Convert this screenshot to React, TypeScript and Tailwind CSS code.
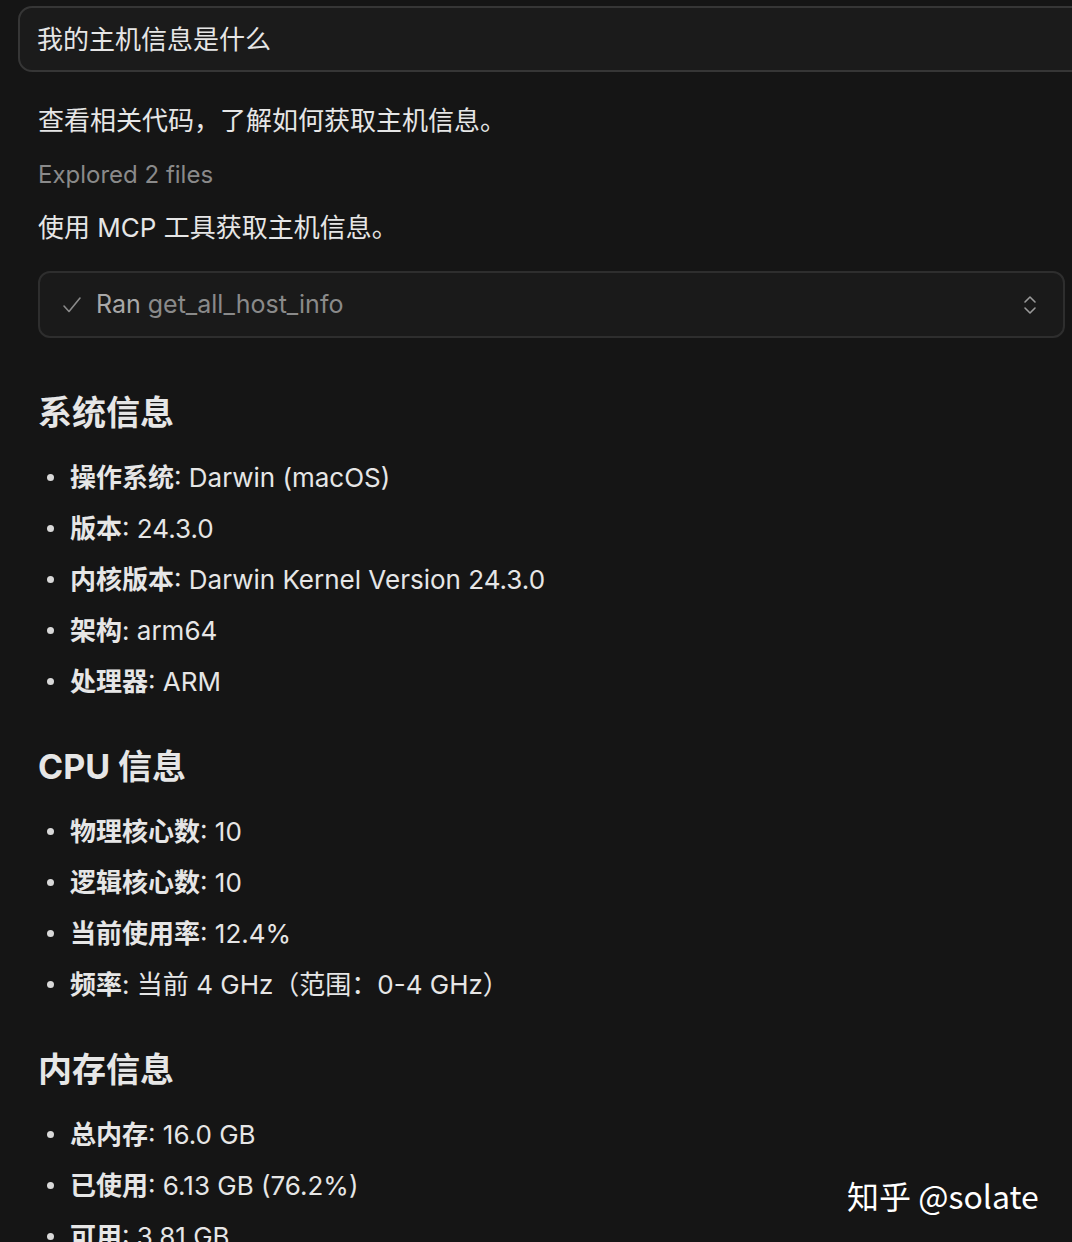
import React from "react";

interface Item {
  label: string;
  value: string;
}

interface Section {
  title: string;
  items: Item[];
}

const sections: Section[] = [
  {
    title: "系统信息",
    items: [
      { label: "操作系统", value: ": Darwin (macOS)" },
      { label: "版本", value: ": 24.3.0" },
      { label: "内核版本", value: ": Darwin Kernel Version 24.3.0" },
      { label: "架构", value: ": arm64" },
      { label: "处理器", value: ": ARM" },
    ],
  },
  {
    title: "CPU 信息",
    items: [
      { label: "物理核心数", value: ": 10" },
      { label: "逻辑核心数", value: ": 10" },
      { label: "当前使用率", value: ": 12.4%" },
      { label: "频率", value: ": 当前 4 GHz（范围：0-4 GHz）" },
    ],
  },
  {
    title: "内存信息",
    items: [
      { label: "总内存", value: ": 16.0 GB" },
      { label: "已使用", value: ": 6.13 GB (76.2%)" },
      { label: "可用", value: ": 3.81 GB" },
    ],
  },
];

const App: React.FC = () => {
  return (
    <div className="relative h-[1242px] w-[1072px] overflow-hidden bg-[#151515] font-['Inter','Noto_Sans_CJK_SC',sans-serif] text-[#e6e6e6]">
      {/* user prompt */}
      <div className="pl-[18px] pt-[6px]">
        <div className="flex h-[66px] w-[1100px] items-center rounded-[14px] border-2 border-[#363636] bg-[#1b1b1b] pl-[17px] text-[26px]">
          我的主机信息是什么
        </div>
      </div>

      <div className="pl-[38px]">
        <p className="mt-[29px] h-[40px] text-[26px] leading-[40px]">查看相关代码，了解如何获取主机信息。</p>
        <p className="mt-[14px] h-[40px] text-[24px] leading-[40px] text-[#8a8a8a]">Explored 2 files</p>
        <p className="mt-[13px] h-[40px] text-[26px] leading-[40px]">使用 MCP 工具获取主机信息。</p>

        {/* tool call */}
        <div className="mt-[23px] flex h-[67px] w-[1027px] items-center rounded-[12px] border-2 border-[#2e2e2e] bg-[#1a1a1a] pl-[22px] pr-[26px]">
          <svg width="20" height="18" viewBox="0 0 20 18" fill="none" stroke="#8a8a8a" strokeWidth="1.6" strokeLinecap="round" strokeLinejoin="round">
            <path d="M2 10 L7 15.5 L18 2" />
          </svg>
          <span className="ml-[14px] text-[25px] text-[#a8a8a8]">Ran</span>
          <span className="ml-[7px] text-[25px] text-[#8a8a8a]">get_all_host_info</span>
          <svg className="ml-auto" width="14" height="20" viewBox="0 0 14 20" fill="none" stroke="#9a9a9a" strokeWidth="1.6" strokeLinecap="round" strokeLinejoin="round">
            <path d="M2 7 L7 2 L12 7" />
            <path d="M2 13 L7 18 L12 13" />
          </svg>
        </div>

        {sections.map((section, i) => (
          <div key={section.title}>
            <h2 className={`${i === 0 ? "mt-[51px]" : "mt-[36px]"} mb-[15px] h-[48px] text-[34px] font-bold leading-[48px]`}>
              {section.title}
            </h2>
            <ul>
              {section.items.map((item) => (
                <li key={item.label} className="flex h-[51px] items-center text-[26px]">
                  <span className="ml-[9px] mr-[16px] h-[7px] w-[7px] rounded-full bg-[#d8d8d8]" />
                  <span className="font-bold">{item.label}</span>
                  <span className="whitespace-pre">{item.value}</span>
                </li>
              ))}
            </ul>
          </div>
        ))}
      </div>

      {/* watermark */}
      <div className="absolute left-[847px] top-[1173px] font-['Noto_Sans_CJK_SC',sans-serif] text-[32px] leading-[44px] text-white">
        知乎 @solate
      </div>
    </div>
  );
};

export default App;
